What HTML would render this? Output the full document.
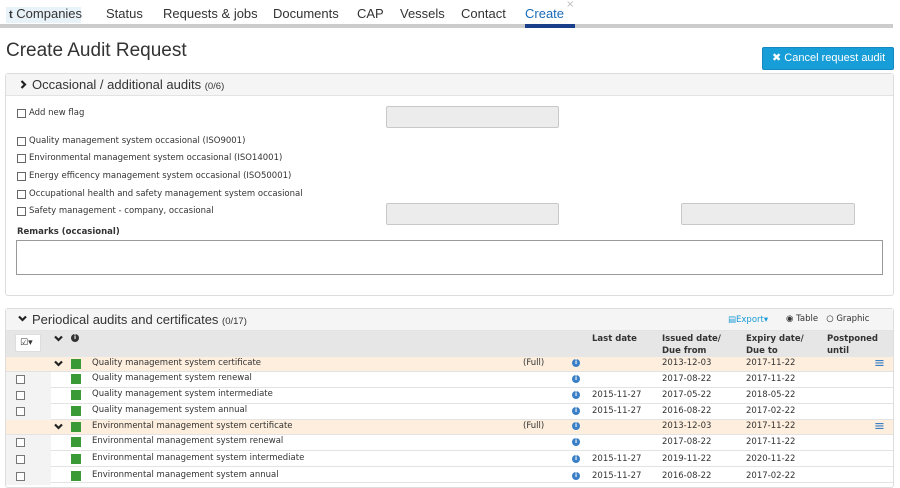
<!DOCTYPE html>
<html><head><meta charset="utf-8"><style>
*{box-sizing:border-box;margin:0;padding:0}
body{width:900px;height:485px;overflow:hidden;background:#fff;font-family:"DejaVu Sans","Liberation Sans",sans-serif;color:#333;position:relative}
.a{position:absolute;white-space:nowrap}
.nav{font-size:13px;top:6px;color:#333;font-family:"Liberation Sans",sans-serif}
.cb{position:absolute;width:9px;height:9px;border:1px solid #666;background:#fff}
.occ{font-size:8.5px;color:#333}
.inp{position:absolute;background:#ececec;border:1px solid #c8c8c8;border-radius:2px}
.row{position:absolute;left:6px;width:887px;border-bottom:1px solid #e3e3e3}
.row.o{background:#fdeedd}
.t{font-size:8.5px;position:absolute;color:#333}
.g{position:absolute;width:10px;height:10px;background:#3a9a35}
.i{position:absolute;width:8px;height:8px;border-radius:50%;background:#3b80c6;color:#fff;font-size:6px;font-weight:bold;text-align:center;line-height:8px}
.rcb{position:absolute;left:10px;width:9px;height:9px;border:1px solid #777;background:#fff}
.th{font-size:8.5px;font-weight:bold;position:absolute;line-height:12px;color:#333}
.chev{position:absolute;width:9px;height:7px}
.lib{font-family:"Liberation Sans",sans-serif}
</style></head><body>
<svg width="0" height="0" style="position:absolute"><defs><symbol id="dn" viewBox="0 0 9 7"><path d="M1 1.5 L4.5 5 L8 1.5" fill="none" stroke="#222" stroke-width="2.2"/></symbol><symbol id="rt" viewBox="0 0 7 9"><path d="M1.5 1 L5 4.5 L1.5 8" fill="none" stroke="#222" stroke-width="2.2"/></symbol></defs></svg>
<div class="a" style="left:6px;top:7px;width:75px;height:16px;background:#e8f3f9"></div>
<div class="a nav" style="left:9px;"><b style="font-size:11px">t</b> Companies</div>
<div class="a nav" style="left:106px">Status</div>
<div class="a nav" style="left:163px">Requests &amp; jobs</div>
<div class="a nav" style="left:273px">Documents</div>
<div class="a nav" style="left:357px">CAP</div>
<div class="a nav" style="left:400px">Vessels</div>
<div class="a nav" style="left:461px">Contact</div>
<div class="a nav" style="left:525px;color:#1a6bb8">Create</div>
<div class="a" style="left:566px;top:-1px;font-size:10px;color:#bbb">×</div>
<div class="a" style="left:0;top:24px;width:893px;height:4px;background:#ccc"></div>
<div class="a" style="left:525px;top:24px;width:50px;height:4px;background:#1a3f8a"></div>
<div class="a lib" style="left:6px;top:40px;font-size:19px;color:#333">Create Audit Request</div>
<div class="a lib" style="left:762px;top:47px;width:132px;height:23px;background:#179ed8;border:1px solid #1389c0;border-radius:2px;color:#fff;font-size:11px;line-height:21px;padding-left:9px">✖ Cancel request audit</div>

<div class="a" style="left:5px;top:73px;width:889px;height:223px;border:1px solid #ddd;border-radius:3px"></div>
<div class="a" style="left:6px;top:74px;width:887px;height:22px;background:#f5f5f5;border-bottom:1px solid #e3e3e3"></div>
<svg class="a" style="left:20px;top:80px" width="7" height="9"><use href="#rt"/></svg>
<div class="a lib" style="left:32px;top:77px;font-size:13px">Occasional / additional audits <span style="font-size:9.5px">(0/6)</span></div>
<div class="cb" style="left:17px;top:109px"></div><div class="a occ" style="left:29px;top:108px">Add new flag</div>
<div class="inp" style="left:386px;top:106px;width:173px;height:22px"></div>
<div class="cb" style="left:17px;top:137px"></div><div class="a occ" style="left:29px;top:136px">Quality management system occasional (ISO9001)</div>
<div class="cb" style="left:17px;top:154px"></div><div class="a occ" style="left:29px;top:153px">Environmental management system occasional (ISO14001)</div>
<div class="cb" style="left:17px;top:172px"></div><div class="a occ" style="left:29px;top:171px">Energy efficency management system occasional (ISO50001)</div>
<div class="cb" style="left:17px;top:190px"></div><div class="a occ" style="left:29px;top:189px">Occupational health and safety management system occasional</div>
<div class="cb" style="left:17px;top:207px"></div><div class="a occ" style="left:29px;top:206px">Safety management - company, occasional</div>
<div class="inp" style="left:386px;top:203px;width:173px;height:22px"></div>
<div class="inp" style="left:681px;top:203px;width:174px;height:22px"></div>
<div class="a" style="left:17px;top:227px;font-size:8.5px;font-weight:bold">Remarks (occasional)</div>
<div class="a" style="left:16px;top:240px;width:867px;height:35px;border:1px solid #999"></div>

<div class="a" style="left:5px;top:308px;width:889px;height:180px;border:1px solid #ddd;border-radius:3px"></div>
<div class="a" style="left:6px;top:309px;width:887px;height:22px;background:#f5f5f5;border-bottom:1px solid #e3e3e3"></div>
<svg class="a" style="left:18px;top:315px" width="9" height="7"><use href="#dn"/></svg>
<div class="a lib" style="left:32px;top:312px;font-size:13px">Periodical audits and certificates <span style="font-size:9.5px">(0/17)</span></div>
<div class="a" style="left:728px;top:315px;font-size:8.5px;color:#1a9bd7">▤Export▾</div>
<div class="a" style="left:786px;top:314px;font-size:8.5px">◉ Table &nbsp;&nbsp;○ Graphic</div>
<div class="a" style="left:6px;top:331px;width:887px;height:26px;background:#e6e6e6"></div>
<div class="a" style="left:15px;top:334px;width:26px;height:18px;background:#fff;border:1px solid #ddd;border-radius:2px;font-size:9px;padding-left:4px;line-height:16px">☑▾</div>
<svg class="a" style="left:54px;top:335px" width="9" height="7"><use href="#dn"/></svg>
<div class="i" style="left:71px;top:334px;background:#333">i</div>
<div class="th" style="left:592px;top:333px">Last date</div>
<div class="th" style="left:662px;top:333px">Issued date/<br>Due from</div>
<div class="th" style="left:746px;top:333px">Expiry date/<br>Due to</div>
<div class="th" style="left:827px;top:333px">Postponed<br>until</div>
<div class="a" style="left:6px;top:357px;width:45px;height:128px;background:#f3f3f3"></div>

<div class="row o" style="top:357px;height:15px"></div>
<div class="row" style="top:372px;height:16px;left:51px;width:842px"></div>
<div class="row" style="top:388px;height:16px;left:51px;width:842px"></div>
<div class="row" style="top:404px;height:16px;left:51px;width:842px"></div>
<div class="row o" style="top:420px;height:15px"></div>
<div class="row" style="top:435px;height:16px;left:51px;width:842px"></div>
<div class="row" style="top:451px;height:16px;left:51px;width:842px"></div>
<div class="row" style="top:467px;height:16px;left:51px;width:842px"></div>

<svg class="a" style="left:54px;top:360px" width="9" height="7"><use href="#dn"/></svg><div class="g" style="left:71px;top:359px"></div><div class="t" style="left:92px;top:358px">Quality management system certificate</div><div class="t" style="left:523px;top:358px">(Full)</div><div class="i" style="left:572px;top:359px">i</div><div class="t" style="left:662px;top:358px">2013-12-03</div><div class="t" style="left:746px;top:358px">2017-11-22</div><div class="a" style="left:874px;top:356px;font-size:13px;color:#3b80c6">≡</div>

<div class="rcb" style="left:16px;top:375px"></div><div class="g" style="left:71px;top:374px"></div><div class="t" style="left:92px;top:373px">Quality management system renewal</div><div class="i" style="left:572px;top:375px">i</div><div class="t" style="left:662px;top:374px">2017-08-22</div><div class="t" style="left:746px;top:374px">2017-11-22</div>

<div class="rcb" style="left:16px;top:391px"></div><div class="g" style="left:71px;top:390px"></div><div class="t" style="left:92px;top:389px">Quality management system intermediate</div><div class="i" style="left:572px;top:391px">i</div><div class="t" style="left:592px;top:390px">2015-11-27</div><div class="t" style="left:662px;top:390px">2017-05-22</div><div class="t" style="left:746px;top:390px">2018-05-22</div>

<div class="rcb" style="left:16px;top:407px"></div><div class="g" style="left:71px;top:406px"></div><div class="t" style="left:92px;top:405px">Quality management system annual</div><div class="i" style="left:572px;top:407px">i</div><div class="t" style="left:592px;top:406px">2015-11-27</div><div class="t" style="left:662px;top:406px">2016-08-22</div><div class="t" style="left:746px;top:406px">2017-02-22</div>

<svg class="a" style="left:54px;top:423px" width="9" height="7"><use href="#dn"/></svg><div class="g" style="left:71px;top:422px"></div><div class="t" style="left:92px;top:421px">Environmental management system certificate</div><div class="t" style="left:523px;top:421px">(Full)</div><div class="i" style="left:572px;top:422px">i</div><div class="t" style="left:662px;top:421px">2013-12-03</div><div class="t" style="left:746px;top:421px">2017-11-22</div><div class="a" style="left:874px;top:419px;font-size:13px;color:#3b80c6">≡</div>

<div class="rcb" style="left:16px;top:438px"></div><div class="g" style="left:71px;top:437px"></div><div class="t" style="left:92px;top:436px">Environmental management system renewal</div><div class="i" style="left:572px;top:438px">i</div><div class="t" style="left:662px;top:437px">2017-08-22</div><div class="t" style="left:746px;top:437px">2017-11-22</div>

<div class="rcb" style="left:16px;top:455px"></div><div class="g" style="left:71px;top:454px"></div><div class="t" style="left:92px;top:453px">Environmental management system intermediate</div><div class="i" style="left:572px;top:455px">i</div><div class="t" style="left:592px;top:454px">2015-11-27</div><div class="t" style="left:662px;top:454px">2019-11-22</div><div class="t" style="left:746px;top:454px">2020-11-22</div>

<div class="rcb" style="left:16px;top:472px"></div><div class="g" style="left:71px;top:471px"></div><div class="t" style="left:92px;top:470px">Environmental management system annual</div><div class="i" style="left:572px;top:472px">i</div><div class="t" style="left:592px;top:471px">2015-11-27</div><div class="t" style="left:662px;top:471px">2016-08-22</div><div class="t" style="left:746px;top:471px">2017-02-22</div>
</body></html>
